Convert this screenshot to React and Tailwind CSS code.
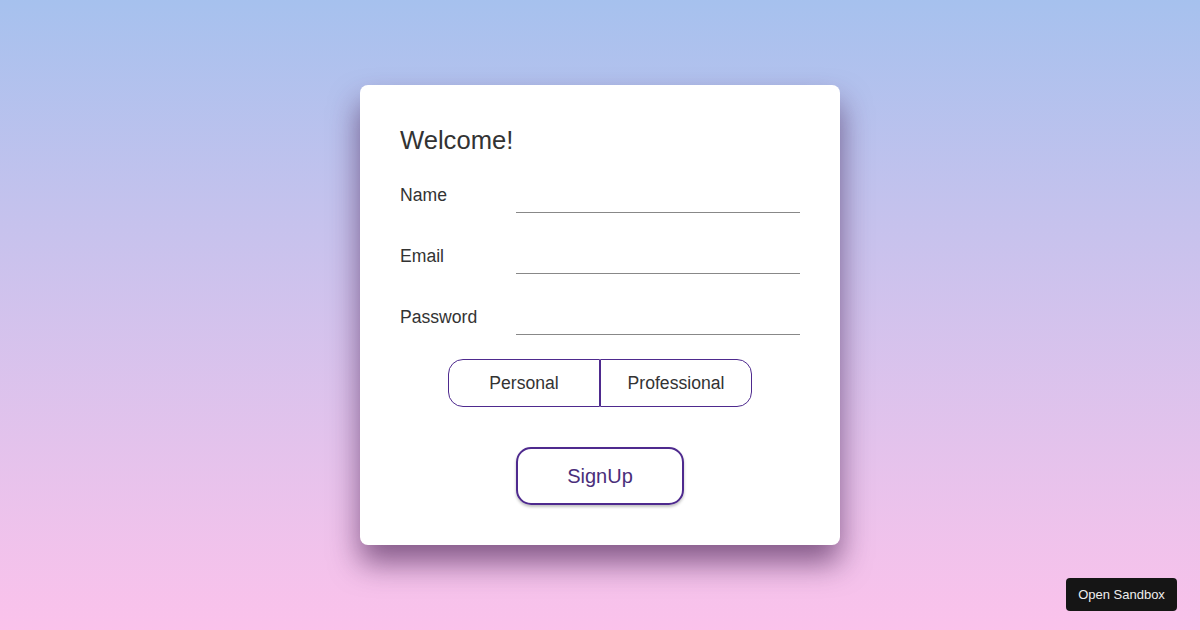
import React, { useState } from "react";

const App = () => {
  const [type, setType] = useState("personal");

  return (
    <div
      className="w-full h-[630px] flex items-center justify-center bg-gradient-to-b from-[#a6c1ee] to-[#fbc2eb] relative"
      style={{ fontFamily: '"Liberation Sans", Arial, sans-serif' }}
    >
      {/* start card */}
      <form
        className="w-[480px] h-[460px] bg-white rounded-lg p-10 flex flex-col shadow-[0_18px_30px_rgba(60,20,70,0.6)]"
        onSubmit={(e) => e.preventDefault()}
      >
        <h1 className="text-[25.6px] leading-[30px] text-[#333]">Welcome!</h1>

        <div className="mt-[22px] flex flex-col gap-[25px]">
          {["Name", "Email", "Password"].map((label) => (
            <div key={label} className="flex items-center h-9">
              <label className="w-[116px] text-[17.6px] text-[#333]">{label}</label>
              <input
                type={label === "Password" ? "password" : "text"}
                className="flex-1 h-9 border-b border-[#888] outline-none text-[16px]"
              />
            </div>
          ))}
        </div>

        {/* toggle personal / professional */}
        <div className="mt-6 flex justify-center">
          <button
            type="button"
            onClick={() => setType("personal")}
            className="w-[152px] h-12 border border-[#4e2a8e] rounded-l-[15px] text-[17.6px] text-[#333]"
          >
            Personal
          </button>
          <button
            type="button"
            onClick={() => setType("professional")}
            className="w-[152px] h-12 border border-[#4e2a8e] rounded-r-[15px] text-[17.6px] text-[#333]"
          >
            Professional
          </button>
        </div>

        <div className="mt-10 flex justify-center">
          <button className="w-[168px] h-[58px] border-2 border-[#4e2a8e] rounded-[15px] text-[20px] text-[#4a2e7a] shadow-[0_2px_3px_rgba(0,0,0,0.25)]">
            SignUp
          </button>
        </div>
      </form>
      {/* end card */}

      <button className="absolute right-[23px] bottom-[19px] w-[111px] h-[33px] bg-[#151515] rounded text-[13px] text-[#eee]">
        Open Sandbox
      </button>
    </div>
  );
};

export default App;
